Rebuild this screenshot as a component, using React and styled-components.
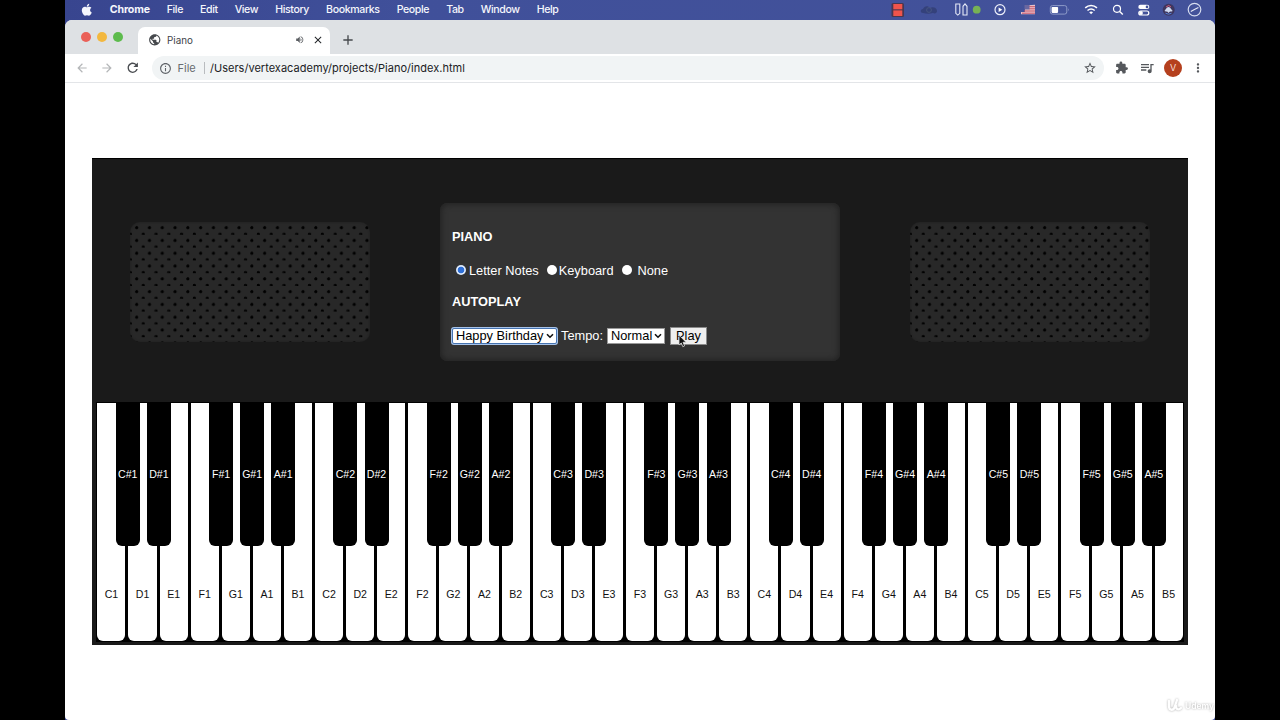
import React, { useState } from 'react'
import styled, { createGlobalStyle } from 'styled-components'
import {
  MdPublic, MdVolumeUp, MdClose, MdAdd, MdArrowBack, MdArrowForward, MdRefresh,
  MdInfoOutline, MdStarBorder, MdExtension, MdQueueMusic, MdMoreVert,
} from 'react-icons/md'
import { FaApple } from 'react-icons/fa'

const menus = ['File', 'Edit', 'View', 'History', 'Bookmarks', 'People', 'Tab', 'Window', 'Help']
const octaves = [1, 2, 3, 4, 5]
const notes = ['C', 'D', 'E', 'F', 'G', 'A', 'B']
const sharps = ['C', 'D', 'F', 'G', 'A']

function MenuBar() {
  return (
    <Menu>
      <AppleLogo><FaApple size={13.5} /></AppleLogo>
      <AppName>Chrome</AppName>
      <MenuItems>
        {menus.map(name => <MenuItem key={name}>{name}</MenuItem>)}
      </MenuItems>
      <StatusIcons />
    </Menu>
  )
}

function StatusIcons() {
  return (
    <Tray width='320' height='20' viewBox='0 0 320 20' fill='none'>
      {/* film strip */}
      <rect x='1.5' y='3' width='12.5' height='14' rx='1.5' fill='#49364f' />
      <rect x='3.3' y='4' width='9' height='5.3' fill='#f0544c' />
      <rect x='3.3' y='10.4' width='9' height='5.6' fill='#f0544c' />
      {/* cloud */}
      <path d='M33 13c-3 0-3-4 0-4 1-3 5-4 7-1 3-2 7 0 7 3 0 2-2 3-4 2-3 1-7 1-10 0Z' fill='#303c70' opacity='.75' />
      <circle cx='39' cy='10' r='2.4' stroke='#475682' />
      {/* pencils */}
      <path d='M65.8 4h4v9.3l-2 1.8-2-1.8ZM73 15V6.3l2-2.5 2 2.5V15Z' stroke='#e4e8f6' strokeWidth='1.1' />
      <circle cx='86.7' cy='9.7' r='3.9' fill='#77b255' />
      {/* play */}
      <circle cx='110' cy='9.7' r='5' stroke='#eef0fa' strokeWidth='1.2' />
      <path d='m108.6 7.5 3.7 2.2-3.7 2.2Z' fill='#fff' />
      {/* flag */}
      <path d='M131 12h4V5.5l10-.8v9.6H131Z' fill='#e9c3ca' />
      <path d='M139 6.7h6M139 8.8h6M132 13.2h13M134 11h11' stroke='#c8566b' />
      <rect x='134.5' y='5' width='5' height='4.5' fill='#6967a0' />
      {/* battery */}
      <rect x='160.3' y='5.6' width='16.5' height='8.5' rx='2.2' stroke='#8d9ac8' />
      <rect x='161.6' y='6.9' width='6.5' height='6' rx='.8' fill='#fff' />
      <path d='M178.3 8.3v3q1.5-1.5 0-3' fill='#8d9ac8' />
      {/* wifi */}
      <path d='M195.2 7.9c3.5-3.1 8.3-3.1 11.8 0M197.5 10.5c2.2-1.9 5-1.9 7.2 0' stroke='#fff' strokeWidth='1.5' />
      <path d='M199.2 12.2q1.9-1.4 3.8 0l-1.9 2.1Z' fill='#fff' />
      {/* search */}
      <circle cx='227' cy='8.8' r='3.5' stroke='#fff' strokeWidth='1.2' />
      <path d='m229.7 11.5 3.1 3.1' stroke='#fff' strokeWidth='1.4' />
      {/* control centre */}
      <rect x='248.3' y='4.8' width='11' height='4.2' rx='2.1' fill='#fff' />
      <circle cx='257' cy='6.9' r='1.3' fill='#43529a' />
      <rect x='248.8' y='11' width='10' height='4' rx='2' stroke='#fff' strokeWidth='1.2' />
      <circle cx='251' cy='13' r='1.9' fill='#fff' />
      {/* siri */}
      <circle cx='278.7' cy='9.8' r='6' fill='#3d365f' />
      <path d='M274.5 11c1-1 2-4 4-4s3 3 4.3 4c-2 1-2.5-.5-4.2 2-1-2-2-1-4.1-2Z' fill='#cfdaf1' />
      <path d='M276 7q3-3 5 0' stroke='#d45a75' />
      <path d='M275.5 13.2q3 2 6 0' stroke='#5681d5' />
      {/* clock */}
      <circle cx='304.5' cy='9.6' r='6.3' stroke='#d6dcef' strokeWidth='1.2' />
      <path d='m300.8 11.5 3.6-1.9 4-2' stroke='#e8ebf7' strokeWidth='1.1' />
    </Tray>
  )
}

function BrowserChrome() {
  return (
    <>
      <TabStrip>
        <Lights>
          <Light color='#ea6058' />
          <Light color='#f3b83f' />
          <Light color='#5dbb4d' />
        </Lights>
        <Tab>
          <MdPublic size={13.5} color='#46494d' />
          <TabTitle>Piano</TabTitle>
          <MdVolumeUp size={9.5} color='#5b5e62' />
          <MdClose size={12} color='#222528' />
        </Tab>
        <NewTab><MdAdd size={16} /></NewTab>
      </TabStrip>
      <Toolbar>
        <NavIcons>
          <MdArrowBack size={14} color='#b4b6b8' />
          <MdArrowForward size={14} color='#b4b6b8' />
          <MdRefresh size={15.5} color='#4a4d51' />
        </NavIcons>
        <AddressBar>
          <MdInfoOutline size={13} color='#5f6368' />
          <Scheme>File</Scheme>
          <Path>/Users/vertexacademy/projects/Piano/index.html</Path>
          <MdStarBorder size={14} color='#55585c' />
        </AddressBar>
        <Actions>
          <MdExtension size={13.5} />
          <MdQueueMusic size={16} />
          <Avatar>V</Avatar>
          <MdMoreVert size={14} />
        </Actions>
      </Toolbar>
    </>
  )
}

function Dropdown({ options, width, focused, ...rest }) {
  return (
    <SelectWrap $width={width} $focused={focused}>
      <Select {...rest}>
        {options.map(option => <option key={option}>{option}</option>)}
      </Select>
      <Chevron width='8' height='6' viewBox='0 0 8 6' fill='none'>
        <path d='m1 1.2 3 3 3-3' stroke='#111' strokeWidth='1.6' />
      </Chevron>
    </SelectWrap>
  )
}

function ControlPanel({ labels, setLabels }) {
  return (
    <Panel>
      <Heading>PIANO</Heading>
      <Choices>
        <Choice $gap={3}>
          <Radio type='radio' name='labels' checked={labels === 'notes'} onChange={() => setLabels('notes')} />
          Letter Notes
        </Choice>
        <Choice $gap={2}>
          <Radio type='radio' name='labels' checked={labels === 'keyboard'} onChange={() => setLabels('keyboard')} />
          Keyboard
        </Choice>
        <Choice $gap={6}>
          <Radio type='radio' name='labels' checked={labels === 'none'} onChange={() => setLabels('none')} />
          None
        </Choice>
      </Choices>
      <Heading>AUTOPLAY</Heading>
      <Autoplay>
        <Dropdown options={['Happy Birthday', 'Jingle Bells']} width={105} focused />
        <TempoLabel>Tempo:</TempoLabel>
        <Dropdown options={['Normal', 'Fast', 'Slow']} width={58} />
        <PlayButton>
          Play
          <Cursor width='9' height='14' viewBox='0 0 9 14'>
            <path d='M1 1v10l2.3-2 1.5 3.7 1.8-.8L5 8.3h3Z' fill='#111' stroke='#ddd' strokeWidth='.8' />
          </Cursor>
        </PlayButton>
      </Autoplay>
    </Panel>
  )
}

function Keyboard({ showLabels }) {
  return (
    <Keys>
      {octaves.map(octave => notes.map(note => (
        <WhiteKey key={note + octave}>
          {showLabels && note + octave}
          {sharps.includes(note) && <BlackKey>{showLabels && `${note}#${octave}`}</BlackKey>}
        </WhiteKey>
      )))}
    </Keys>
  )
}

function App() {
  const [labels, setLabels] = useState('notes')

  return (
    <Screen>
      <GlobalStyle />
      <Desktop>
        <MenuBar />
        <Window>
          <BrowserChrome />
          <Page>
            <Piano>
              <Top>
                <Speaker />
                <ControlPanel labels={labels} setLabels={setLabels} />
                <Speaker />
              </Top>
              <Keyboard showLabels={labels === 'notes'} />
            </Piano>
          </Page>
          <Watermark>
            <svg width='16' height='15' viewBox='0 0 16 15' fill='none'>
              <path d='M2 3v5c0 5 5 5 6 0l2-6M9 8c0 4 3 4 5 2' stroke='#fff' strokeWidth='2.3' strokeLinecap='round' />
            </svg>
            Udemy
          </Watermark>
        </Window>
      </Desktop>
    </Screen>
  )
}

export default App

const GlobalStyle = createGlobalStyle`
* { box-sizing: border-box; }
body {
  margin: 0;
  background: #000;
  overflow: hidden;
}
svg { flex-shrink: 0; }
`

const Screen = styled.div`
width: 1280px;
height: 720px;
padding: 0 65px;
background: #000;
font-family: Inter, "Liberation Sans", sans-serif;
`

const Desktop = styled.div`
display: flex;
flex-direction: column;
height: 100%;
background: linear-gradient(90deg, #38458f, #40509a 30%, #43529a);
`

const Menu = styled.header`
display: flex;
align-items: center;
flex: 0 0 20px;
padding-left: 15px;
color: #f5f6fc;
font-size: 10.6px;
line-height: 20px;
`

const AppleLogo = styled.span`
display: flex;
width: 29.8px;
padding-bottom: 1px;
`

const AppName = styled.span`
width: 56.9px;
font-weight: 700;
letter-spacing: -0.15px;
`

const MenuItems = styled.nav`
display: flex;
gap: 17px;
`

const MenuItem = styled.span`
font-weight: 500;
letter-spacing: -0.38px;
`

const Tray = styled.svg`
margin: 0 5px 0 auto;
`

const Window = styled.main`
display: flex;
flex-direction: column;
flex: 1;
background: #fff;
border-radius: 7px 7px 4px 4px;
overflow: hidden;
`

const TabStrip = styled.div`
display: flex;
align-items: flex-end;
flex: 0 0 34px;
background: #dee1e4;
`

const Lights = styled.div`
display: flex;
gap: 6px;
width: 73px;
padding: 0 0 11.7px 15.5px;
`

const Light = styled.span`
width: 10px;
height: 10px;
border-radius: 50%;
background: ${props => props.color};
`

const Tab = styled.div`
display: flex;
align-items: center;
width: 192px;
height: 27px;
padding: 0 6.5px 1px 9.5px;
background: #fff;
border-radius: 7px 7px 0 0;

svg:last-child { margin-left: 7px; }
`

const TabTitle = styled.span`
flex: 1;
margin-left: 6px;
color: #404347;
font-size: 9.8px;
`

const NewTab = styled.span`
display: flex;
padding: 0 0 6px 10px;
color: #45484c;
`

const Toolbar = styled.div`
display: flex;
align-items: center;
flex: 0 0 29px;
border-bottom: 1px solid #e3e5e8;
background: #fff;
`

const NavIcons = styled.div`
display: flex;
align-items: center;
gap: 11px;
width: 87px;
padding-left: 10px;
`

const AddressBar = styled.div`
display: flex;
align-items: center;
width: 952px;
height: 24px;
padding: 0 7px 0 6.5px;
border-radius: 12px;
background: #f1f4f5;
font-size: 11px;
line-height: 12px;

svg:last-child { margin-left: auto; }
`

const Scheme = styled.span`
width: 27px;
margin-left: 6px;
border-right: 1px solid #b9bcbf;
color: #686c70;
`

const Path = styled.span`
margin-left: 5.5px;
color: #202124;
letter-spacing: 0.02px;
`

const Actions = styled.div`
display: flex;
align-items: center;
margin-left: 10.5px;
color: #55585c;

svg:nth-child(2) { margin-left: 11px; }
svg:last-child { margin-left: 9px; }
`

const Avatar = styled.span`
width: 18px;
height: 18px;
margin-left: 9px;
border-radius: 50%;
background: #b5401e;
color: #f7dfd6;
font-size: 9px;
line-height: 18px;
text-align: center;
`

const Page = styled.div`
flex: 1;
padding: 74.6px 27px 0;
`

const Piano = styled.section`
height: 487.5px;
padding: 0 4px;
border-top: 1px solid #000;
background: #1a1a1a;
font-family: "Liberation Sans", Arial, sans-serif;
`

const Top = styled.div`
display: flex;
justify-content: space-between;
align-items: center;
height: 243px;
padding: 3px 34px 0;
`

const Speaker = styled.div`
width: 240px;
height: 120px;
border-radius: 10px;
background-color: #282828;
background-image:
  radial-gradient(circle at 6.7px 5.7px, #000 1.2px, transparent 1.9px),
  radial-gradient(circle at 0.3px 12.1px, #000 1.2px, transparent 1.9px),
  radial-gradient(circle at 13.1px 12.1px, #000 1.2px, transparent 1.9px);
background-size: 12.8px 12.8px;
box-shadow: inset 0 0 2px #1d1d1d;
`

const Panel = styled.div`
width: 400px;
height: 158px;
padding: 26.5px 12px 0;
border-radius: 7px;
background: #333;
box-shadow: inset 0 0 6px 1px #202020;
color: #fff;
font-size: 12.8px;
line-height: 16px;
`

const Heading = styled.h4`
margin: 0;
font-size: 12.8px;
line-height: 16px;
`

const Choices = styled.div`
display: flex;
gap: 8px;
height: 16px;
margin: 18px 0 15px;
padding-left: 4px;
`

const Choice = styled.label`
display: flex;
align-items: center;
gap: ${props => props.$gap}px;
`

const Radio = styled.input`
appearance: none;
width: 10px;
height: 10px;
margin: 0 0 2px;
border-radius: 50%;
background: #fff;

&:checked {
  background: radial-gradient(circle, #2f70d8 2.9px, #e4eefc 3.7px, #d3e3fa 5px);
}
`

const Autoplay = styled.div`
display: flex;
align-items: center;
height: 20px;
margin-top: 15.5px;
`

const SelectWrap = styled.span`
position: relative;
display: flex;
width: ${props => props.$width}px;
height: 16px;
background: #fff;
border: 1px solid ${props => props.$focused ? '#4673b0' : '#999'};
box-shadow: ${props => props.$focused ? '0 0 0 1px #a6c3ea' : 'none'};
border-radius: ${props => props.$focused ? '2px' : '0'};
`

const Select = styled.select`
appearance: none;
width: 100%;
padding: 0 0 0 3px;
border: 0;
outline: 0;
background: transparent;
color: #000;
font: 12.8px/14px "Liberation Sans", Arial, sans-serif;
`

const Chevron = styled.svg`
position: absolute;
right: 2px;
top: 4px;
pointer-events: none;
`

const TempoLabel = styled.span`
width: 50px;
padding-left: 4px;
`

const PlayButton = styled.button`
position: relative;
width: 37px;
height: 18px;
margin-left: 5px;
padding: 0;
border: 1px solid #8a8a8a;
background: #efefef;
color: #000;
font: 12.8px/15px "Liberation Sans", Arial, sans-serif;
`

const Cursor = styled.svg`
position: absolute;
left: 7px;
top: 6px;
`

const Keys = styled.div`
display: grid;
grid-template-columns: repeat(35, 1fr);
gap: 3px;
height: 240px;
padding: 1.4px 1.4px 1px;
background: #000;
`

const WhiteKey = styled.div`
position: relative;
display: flex;
justify-content: center;
align-items: flex-end;
padding-bottom: 40px;
border-radius: 0 0 6px 6px;
background: #fff;
color: #111;
font-size: 10.6px;
line-height: 13px;
`

const BlackKey = styled.div`
position: absolute;
left: 18.4px;
top: -1px;
z-index: 1;
display: flex;
justify-content: center;
width: 24px;
height: 143.6px;
padding-top: 66px;
border-radius: 0 0 6px 6px;
background: #000;
color: #fff;
`

const Watermark = styled.div`
position: absolute;
left: 1167px;
top: 698px;
display: flex;
align-items: center;
gap: 2px;
color: #fff;
font-size: 8.5px;
font-weight: 600;
filter: drop-shadow(0 0 1px #aaa);
`
